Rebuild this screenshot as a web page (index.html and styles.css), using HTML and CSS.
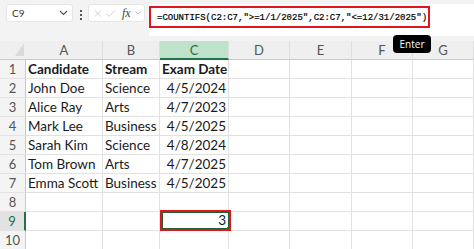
FILE: index.html
```html
<!DOCTYPE html>
<html lang="en">
<head>
    <meta charset="UTF-8">
    <title>COUNTIFS - Excel</title>
    <link rel="stylesheet" href="styles.css">
</head>
<body>
    <!-- Barre de formule -->
    <div class="toolbar">
        <div class="name-box">
            <span>C9</span>
            <svg class="chev" width="9" height="6" viewBox="0 0 9 6"><path d="M1 1 L4.5 4.5 L8 1" fill="none" stroke="#555" stroke-width="1.2"/></svg>
        </div>
        <div class="dots"><i></i><i></i><i></i></div>
        <div class="fx-box">
            <svg width="11" height="11" viewBox="0 0 11 11"><path d="M1 1 L10 10 M10 1 L1 10" stroke="#bbb" stroke-width="1"/></svg>
            <svg width="13" height="11" viewBox="0 0 13 11"><path d="M1 6 L4.5 9.5 L12 1.5" fill="none" stroke="#bbb" stroke-width="1"/></svg>
            <span class="fx">fx</span>
            <svg width="9" height="6" viewBox="0 0 9 6"><path d="M1 1 L4.5 4.5 L8 1" fill="none" stroke="#999" stroke-width="1"/></svg>
        </div>
        <div class="formula-bar">
            <span class="formula">=COUNTIFS(C2:C7,"&gt;=1/1/2025",C2:C7,"&lt;=12/31/2025")</span>
        </div>
    </div>

    <!-- Feuille -->
    <div class="sheet">
        <div class="corner"><span class="tri"></span></div>
        <div class="col-head">A</div>
        <div class="col-head">B</div>
        <div class="col-head active">C</div>
        <div class="col-head">D</div>
        <div class="col-head">E</div>
        <div class="col-head">F</div>
        <div class="col-head">G</div>

        <div class="row-head">1</div>
        <div class="cell bold">Candidate</div><div class="cell bold">Stream</div><div class="cell bold">Exam Date</div>
        <div class="cell"></div><div class="cell"></div><div class="cell"></div><div class="cell"></div>

        <div class="row-head">2</div>
        <div class="cell">John Doe</div><div class="cell">Science</div><div class="cell num">4/5/2024</div>
        <div class="cell"></div><div class="cell"></div><div class="cell"></div><div class="cell"></div>

        <div class="row-head">3</div>
        <div class="cell">Alice Ray</div><div class="cell">Arts</div><div class="cell num">4/7/2023</div>
        <div class="cell"></div><div class="cell"></div><div class="cell"></div><div class="cell"></div>

        <div class="row-head">4</div>
        <div class="cell">Mark Lee</div><div class="cell">Business</div><div class="cell num">4/5/2025</div>
        <div class="cell"></div><div class="cell"></div><div class="cell"></div><div class="cell"></div>

        <div class="row-head">5</div>
        <div class="cell">Sarah Kim</div><div class="cell">Science</div><div class="cell num">4/8/2024</div>
        <div class="cell"></div><div class="cell"></div><div class="cell"></div><div class="cell"></div>

        <div class="row-head">6</div>
        <div class="cell">Tom Brown</div><div class="cell">Arts</div><div class="cell num">4/7/2025</div>
        <div class="cell"></div><div class="cell"></div><div class="cell"></div><div class="cell"></div>

        <div class="row-head">7</div>
        <div class="cell">Emma Scott</div><div class="cell">Business</div><div class="cell num">4/5/2025</div>
        <div class="cell"></div><div class="cell"></div><div class="cell"></div><div class="cell"></div>

        <div class="row-head">8</div>
        <div class="cell"></div><div class="cell"></div><div class="cell"></div>
        <div class="cell"></div><div class="cell"></div><div class="cell"></div><div class="cell"></div>

        <div class="row-head active">9</div>
        <div class="cell"></div><div class="cell"></div><div class="cell num selected">3<span class="handle"></span></div>
        <div class="cell"></div><div class="cell"></div><div class="cell"></div><div class="cell"></div>

        <div class="row-head">10</div>
        <div class="cell"></div><div class="cell"></div><div class="cell"></div>
        <div class="cell"></div><div class="cell"></div><div class="cell"></div><div class="cell"></div>
    </div>

    <!-- Infobulle touche -->
    <div class="key-tip">Enter</div>
</body>
</html>
```

FILE: styles.css
```css
/* Page */
body {
    margin: 0;
    font-family: Lato, "Open Sans", sans-serif;
    background: #f3f3f3;
    color: #222;
    overflow: hidden;
    position: relative;
}

/* Barre du haut */
.toolbar {
    display: flex;
    align-items: flex-start;
    height: 41px;
    padding: 4px 0 0 6px;
    box-sizing: border-box;
}

.name-box {
    width: 67px;
    height: 18px;
    box-sizing: border-box;
    background: #fff;
    border: 1px solid #e6e6e6;
    border-radius: 3px;
    display: flex;
    align-items: center;
    justify-content: space-between;
    padding: 0 4px 0 5px;
    font-size: 10px;
    color: #333;
}

.dots {
    display: flex;
    flex-direction: column;
    gap: 2px;
    padding: 6px 6px 0 7px;
}

.dots i {
    display: block;
    width: 2px;
    height: 2px;
    background: #555;
}

.fx-box {
    width: 57px;
    height: 18px;
    box-sizing: border-box;
    background: #fff;
    border: 1px solid #e6e6e6;
    border-radius: 3px;
    display: flex;
    align-items: center;
    gap: 4px;
    padding: 0 3px 0 5px;
}

.fx {
    font-family: "Liberation Serif", serif;
    font-style: italic;
    font-size: 12px;
    color: #444;
    margin-left: 3px;
}

.formula-bar {
    flex: 1;
    height: 32px;
    background: #fff;
    margin-left: 4px;
}

.formula {
    display: inline-block;
    border: 2px solid #e0161e;
    padding: 2px 3px 3px 6px;
    width: 281px;
    height: 22px;
    box-sizing: border-box;
    font-family: "Liberation Mono", monospace;
    font-size: 9px;
    line-height: 16px;
    color: #000;
    white-space: nowrap;
    -webkit-text-stroke: 0.2px #000;
}

/* Grille */
.sheet {
    display: grid;
    grid-template-columns: 26px 77px 57px 69px 61px 62px 61px 1fr;
    grid-auto-rows: 19px;
    background: #fff;
}

.corner {
    background: #efefef;
    border-bottom: 1px solid #c9c9c9;
    position: relative;
}

.tri {
    position: absolute;
    right: 2px;
    bottom: 3px;
    width: 0;
    height: 0;
    border-left: 9px solid transparent;
    border-bottom: 13px solid #dadada;
}

.col-head {
    background: #efefef;
    border-bottom: 1px solid #c9c9c9;
    border-right: 1px solid #dedede;
    text-align: center;
    font-size: 13px;
    line-height: 19px;
    color: #555;
}

.col-head.active {
    background: #bfe2cb;
    border-bottom: 2px solid #217346;
    color: #2b6b45;
}

.row-head {
    background: #f4f4f4;
    border-bottom: 1px solid #e3e3e3;
    border-right: 1px solid #c9c9c9;
    text-align: center;
    font-size: 13px;
    line-height: 19px;
    color: #555;
}

.row-head.active {
    background: #e2e2e2;
    border-right: 2px solid #217346;
    color: #217346;
}

.cell {
    border-bottom: 1px solid #e1e1e1;
    border-right: 1px solid #e1e1e1;
    font-size: 13.5px;
    line-height: 19px;
    padding: 0 2px;
    white-space: nowrap;
    overflow: visible;
    color: #1a1a1a;
}

.bold {
    font-weight: bold;
}

.num {
    text-align: right;
}

.selected {
    position: relative;
    border: 2px solid #e0161e;
    margin: -2px -2px 0 0;
    box-shadow: inset 0 0 0 1px #1e5e37;
    line-height: 17px;
    padding-right: 3px;
}

.handle {
    position: absolute;
    right: -1px;
    bottom: -1px;
    width: 3px;
    height: 3px;
    background: #217346;
}

/* Infobulle */
.key-tip {
    position: absolute;
    left: 393px;
    top: 35px;
    width: 38px;
    height: 18px;
    background: #000;
    color: #fff;
    border-radius: 4px;
    font-family: "Open Sans", sans-serif;
    font-size: 10px;
    line-height: 18px;
    text-align: center;
}
```
